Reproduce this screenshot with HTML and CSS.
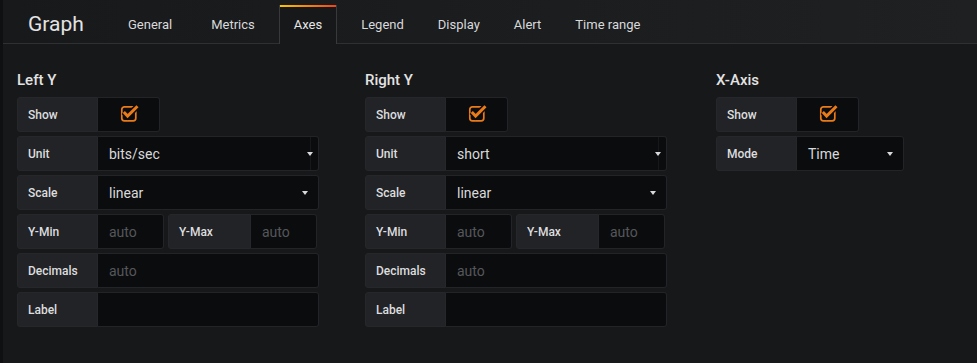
FILE: index.html
```html
<!DOCTYPE html>
<html>
<head>
<meta charset="utf-8">
<link rel="stylesheet" href="styles.css">
</head>
<body>
<div class="page">
  <div class="header">
    <div class="title">Graph</div>
    <ul class="tabs">
      <li class="tab lead">General</li>
      <li class="tab lead">Metrics</li>
      <li class="tab lead active">Axes</li>
      <li class="tab">Legend</li>
      <li class="tab">Display</li>
      <li class="tab">Alert</li>
      <li class="tab">Time range</li>
    </ul>
  </div>
  <div class="content">
    <div class="section">
      <h5 class="heading">Left Y</h5>
      <div class="row">
        <div class="label">Show</div>
        <div class="check">
          <svg class="cb" viewBox="0 -1 20 18" width="20" height="18"><rect x="2.8" y="0.8" width="14" height="14" rx="2.6" fill="none" stroke="#eb7b18" stroke-width="1.7"/><polyline points="4.8,6 8.6,10 18.5,0.3" fill="none" stroke="#0b0c0e" stroke-width="6"/><polyline points="4.8,6 8.6,10 18.5,0.3" fill="none" stroke="#eb7b18" stroke-width="3"/></svg>
        </div>
      </div>
      <div class="row">
        <div class="label">Unit</div>
        <div class="input full unit"><span class="val">bits/sec</span><span class="caret"></span></div>
      </div>
      <div class="row">
        <div class="label">Scale</div>
        <div class="input full select"><span class="val">linear</span><span class="caret"></span></div>
      </div>
      <div class="row">
        <div class="label">Y-Min</div>
        <div class="input small"><span class="ph">auto</span></div>
        <div class="label ml">Y-Max</div>
        <div class="input small"><span class="ph">auto</span></div>
      </div>
      <div class="row">
        <div class="label">Decimals</div>
        <div class="input full"><span class="ph">auto</span></div>
      </div>
      <div class="row">
        <div class="label">Label</div>
        <div class="input full"></div>
      </div>
    </div>

    <div class="section">
      <h5 class="heading">Right Y</h5>
      <div class="row">
        <div class="label">Show</div>
        <div class="check">
          <svg class="cb" viewBox="0 -1 20 18" width="20" height="18"><rect x="2.8" y="0.8" width="14" height="14" rx="2.6" fill="none" stroke="#eb7b18" stroke-width="1.7"/><polyline points="4.8,6 8.6,10 18.5,0.3" fill="none" stroke="#0b0c0e" stroke-width="6"/><polyline points="4.8,6 8.6,10 18.5,0.3" fill="none" stroke="#eb7b18" stroke-width="3"/></svg>
        </div>
      </div>
      <div class="row">
        <div class="label">Unit</div>
        <div class="input full unit"><span class="val">short</span><span class="caret"></span></div>
      </div>
      <div class="row">
        <div class="label">Scale</div>
        <div class="input full select"><span class="val">linear</span><span class="caret"></span></div>
      </div>
      <div class="row">
        <div class="label">Y-Min</div>
        <div class="input small"><span class="ph">auto</span></div>
        <div class="label ml">Y-Max</div>
        <div class="input small"><span class="ph">auto</span></div>
      </div>
      <div class="row">
        <div class="label">Decimals</div>
        <div class="input full"><span class="ph">auto</span></div>
      </div>
      <div class="row">
        <div class="label">Label</div>
        <div class="input full"></div>
      </div>
    </div>

    <div class="section">
      <h5 class="heading">X-Axis</h5>
      <div class="row">
        <div class="label">Show</div>
        <div class="check">
          <svg class="cb" viewBox="0 -1 20 18" width="20" height="18"><rect x="2.8" y="0.8" width="14" height="14" rx="2.6" fill="none" stroke="#eb7b18" stroke-width="1.7"/><polyline points="4.8,6 8.6,10 18.5,0.3" fill="none" stroke="#0b0c0e" stroke-width="6"/><polyline points="4.8,6 8.6,10 18.5,0.3" fill="none" stroke="#eb7b18" stroke-width="3"/></svg>
        </div>
      </div>
      <div class="row">
        <div class="label">Mode</div>
        <div class="input mode select"><span class="val">Time</span><span class="caret"></span></div>
      </div>
    </div>
  </div>
</div>
</body>
</html>
```

FILE: styles.css
```css
html, body {
  margin: 0;
  padding: 0;
  background: #17181a;
  height: 100%;
}

body {
  font-family: Roboto, "Liberation Sans", sans-serif;
  color: #d8d9da;
}

.page {
  min-height: 100%;
  border-left: 3px solid #0f1011;
  box-sizing: border-box;
}

.header {
  display: flex;
  height: 44px;
  box-sizing: border-box;
  border-bottom: 1px solid #2f3033;
  background: linear-gradient(90deg, #18191b, #1f2022);
  padding-left: 25px;
}

.title {
  flex: 0 0 85px;
  font-size: 21px;
  line-height: 37px;
  padding-top: 6px;
  color: #e3e3e3;
}

.tabs {
  display: flex;
  gap: 4px;
  list-style: none;
  margin: 0 0 -1px 0;
  padding: 0;
  align-self: flex-end;
}

.tab {
  font-size: 13px;
  line-height: 35px;
  padding: 0 14px 2px;
  border: 1px solid transparent;
  border-top: 2px solid transparent;
  border-bottom: 0;
  color: #d8d9da;
  white-space: nowrap;
}

.tab.lead {
  margin-right: 5px;
}

.tab.active {
  border-top: 0;
  padding-top: 2px;
  border-color: #38393c;
  background: linear-gradient(90deg, #fbc800, #f2401b) top left / 100% 2px no-repeat border-box, #17181a;
  color: #e6e6e6;
}

.content {
  display: grid;
  grid-template-columns: 348px 351px 1fr;
  padding: 27px 0 0 14px;
}

.heading {
  margin: 0 0 8px 0;
  font-size: 15px;
  line-height: 18px;
  font-weight: 500;
  color: #e3e3e3;
}

.row {
  display: flex;
  height: 35px;
  margin-bottom: 4px;
}

.label {
  width: 81px;
  box-sizing: border-box;
  display: flex;
  align-items: center;
  padding-left: 10px;
  background: #222326;
  border: 1px solid #26272a;
  border-radius: 3px 0 0 3px;
  font-size: 12px;
  font-weight: 500;
  color: #dcdddf;
}

.label.ml {
  margin-left: 4px;
  width: 83px;
}

.input, .check {
  box-sizing: border-box;
  background: #0b0c0e;
  border: 1px solid #232427;
  border-left: 0;
  border-radius: 0 3px 3px 0;
  display: flex;
  align-items: center;
  font-size: 14px;
}

.input {
  padding-left: 11px;
}

.check {
  width: 62px;
  justify-content: center;
}

.cb {
  margin-bottom: 2px;
}

.full { width: 221px; }
.small { width: 66px; }
.mode { width: 107px; }

.val {
  flex: 1;
  color: #d8d9da;
}

.ph {
  color: #55575b;
}

.caret {
  width: 0;
  height: 0;
  border-top: 4px solid #d8d9da;
  border-left: 3.5px solid transparent;
  border-right: 3.5px solid transparent;
  margin-right: 10px;
  margin-top: 1px;
}

.unit .val {
  align-self: stretch;
  display: flex;
  align-items: center;
  border-right: 1px solid #17181b;
  margin-right: -4px;
}

.unit .caret {
  margin-right: 5px;
}
```
